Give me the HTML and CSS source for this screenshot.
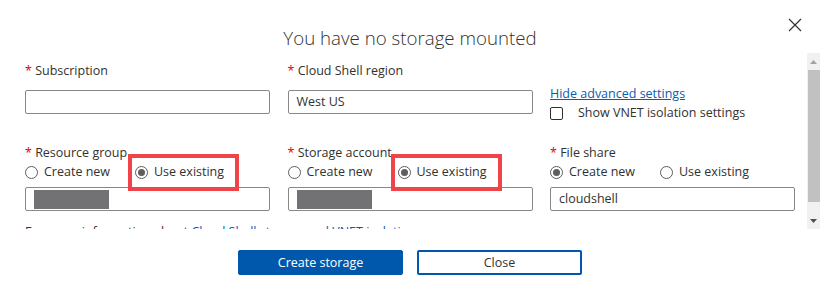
FILE: index.html
```html
<!DOCTYPE html>
<html>
<head>
    <title>Cloud Shell storage</title>
    <link rel="stylesheet" href="styles.css">
</head>
<body>
    <div class="dialog">
        <div class="dialog-top">
            <h1 class="title">You have no storage mounted</h1>
            <button class="close-btn" aria-label="Close">
                <svg width="16" height="16" viewBox="0 0 16 16"><path d="M2 2L14 14M14 2L2 14" stroke="#323130" stroke-width="1.2" fill="none"/></svg>
            </button>
        </div>

        <div class="dialog-body">
            <div class="form-area">
                <div class="form-grid">
                    <div class="field">
                        <label class="field-label"><span class="req">*</span> Subscription</label>
                        <div class="textbox"></div>
                    </div>
                    <div class="field">
                        <label class="field-label"><span class="req">*</span> Cloud Shell region</label>
                        <div class="textbox">West US</div>
                    </div>
                    <div class="field settings">
                        <a class="adv-link" href="#">Hide advanced settings</a>
                        <div class="check-row">
                            <span class="checkbox"></span>
                            <span>Show VNET isolation settings</span>
                        </div>
                    </div>

                    <div class="field">
                        <label class="field-label tight"><span class="req">*</span> Resource group</label>
                        <div class="radio-row">
                            <span class="option"><span class="dot"></span>Create new</span>
                            <span class="option marked"><span class="dot on"></span>Use existing</span>
                        </div>
                        <div class="textbox"><span class="redact"></span></div>
                    </div>
                    <div class="field">
                        <label class="field-label tight"><span class="req">*</span> Storage account</label>
                        <div class="radio-row">
                            <span class="option"><span class="dot"></span>Create new</span>
                            <span class="option marked"><span class="dot on"></span>Use existing</span>
                        </div>
                        <div class="textbox"><span class="redact"></span></div>
                    </div>
                    <div class="field">
                        <label class="field-label tight"><span class="req">*</span> File share</label>
                        <div class="radio-row">
                            <span class="option"><span class="dot on"></span>Create new</span>
                            <span class="option"><span class="dot"></span>Use existing</span>
                        </div>
                        <div class="textbox">cloudshell</div>
                    </div>
                </div>
                <p class="info">For more information about <a href="#">Cloud Shell storage and VNET isolation</a>.</p>
            </div>
            <div class="scrollbar">
                <span class="scroll-arrow"><svg width="7" height="4" viewBox="0 0 7 4"><path d="M0 4L3.5 0L7 4Z" fill="#a3a3a3"/></svg></span>
                <span class="scroll-thumb"></span>
                <span class="scroll-space"></span>
                <span class="scroll-arrow"><svg width="7" height="4" viewBox="0 0 7 4"><path d="M0 0L3.5 4L7 0Z" fill="#505050"/></svg></span>
            </div>
        </div>

        <div class="dialog-footer">
            <button class="btn btn-primary">Create storage</button>
            <button class="btn btn-secondary">Close</button>
        </div>
    </div>
</body>
</html>
```

FILE: styles.css
```css
body {
    margin: 0;
    font-family: "Open Sans", "Noto Sans", sans-serif;
    font-size: 12.5px;
    color: #323130;
    background-color: #fff;
}
.dialog {
    width: 820px;
    height: 302px;
    display: flex;
    flex-direction: column;
}
.dialog-top {
    height: 53px;
    box-sizing: border-box;
    padding-top: 17px;
    display: grid;
    grid-template-columns: 1fr auto 1fr;
}
.title {
    grid-column: 2;
    margin: 9px 0 0;
    font-size: 18.7px;
    font-weight: 300;
    line-height: 24px;
    color: #323130;
}
.close-btn {
    grid-column: 3;
    justify-self: end;
    align-self: start;
    margin-right: 17px;
    width: 16px;
    height: 16px;
    padding: 0;
    border: none;
    background: none;
}
.close-btn svg {
    display: block;
}

.dialog-body {
    display: flex;
    height: 176px;
}
.form-area {
    flex: 1;
    overflow: hidden;
    padding: 10px 0 0 25px;
}
.form-grid {
    display: grid;
    grid-template-columns: 245px 245px 245px;
    column-gap: 17.5px;
    row-gap: 24px;
    align-items: start;
}
.field-label {
    display: block;
    line-height: 16px;
    margin-bottom: 11px;
}
.field-label.tight {
    margin-bottom: 3px;
}
.req {
    color: #e50000;
}
.textbox {
    height: 24px;
    box-sizing: border-box;
    border: 1px solid #8a8886;
    border-radius: 2px;
    padding: 0 8px;
    display: flex;
    align-items: center;
    line-height: 16px;
}
.redact {
    width: 75px;
    height: 19px;
    background-color: #727174;
}

.settings {
    padding-top: 23px;
}
.adv-link {
    display: block;
    width: max-content;
    color: #0a5cb0;
    line-height: 16px;
}
.check-row {
    display: flex;
    align-items: center;
    margin-top: 3px;
    line-height: 16px;
}
.checkbox {
    width: 13px;
    height: 13px;
    box-sizing: border-box;
    border: 1px solid #323130;
    border-radius: 2px;
    margin-right: 15px;
}

.radio-row {
    display: flex;
    line-height: 16px;
    margin-bottom: 7px;
}
.option {
    flex: 0 0 110px;
    display: flex;
    align-items: center;
    position: relative;
}
.option:last-child {
    flex: none;
}
.dot {
    width: 13px;
    height: 13px;
    box-sizing: border-box;
    border: 1px solid #605e5c;
    border-radius: 50%;
    margin-right: 6px;
    display: flex;
    align-items: center;
    justify-content: center;
}
.dot.on::after {
    content: "";
    width: 7px;
    height: 7px;
    border-radius: 50%;
    background-color: #605e5c;
}
/* annotation box drawn over the chosen option */
.option.marked::after {
    content: "";
    position: absolute;
    left: -7px;
    top: -10px;
    width: 111px;
    height: 37px;
    box-sizing: border-box;
    border: 4px solid #f04448;
}

.info {
    margin: 13px 0 0;
    line-height: 16px;
    white-space: nowrap;
}
.info a {
    color: #0a5cb0;
    text-decoration: none;
}

.scrollbar {
    width: 13px;
    background-color: #f1f1f1;
    display: flex;
    flex-direction: column;
}
.scroll-arrow {
    height: 17px;
    display: flex;
    align-items: center;
    justify-content: center;
}
.scroll-thumb {
    height: 132px;
    margin-left: 1px;
    background-color: #c1c1c1;
}
.scroll-space {
    flex: 1;
}

.dialog-footer {
    display: flex;
    justify-content: center;
    gap: 14px;
    padding-top: 21px;
}
.btn {
    width: 165px;
    height: 25px;
    box-sizing: border-box;
    border-radius: 2px;
    font-family: inherit;
    font-size: 12.5px;
    cursor: pointer;
}
.btn-primary {
    background-color: #0058ad;
    border: 1px solid #0058ad;
    color: #fff;
}
.btn-secondary {
    background-color: #fff;
    border: 2px solid #0058ad;
    color: #323130;
}
```
